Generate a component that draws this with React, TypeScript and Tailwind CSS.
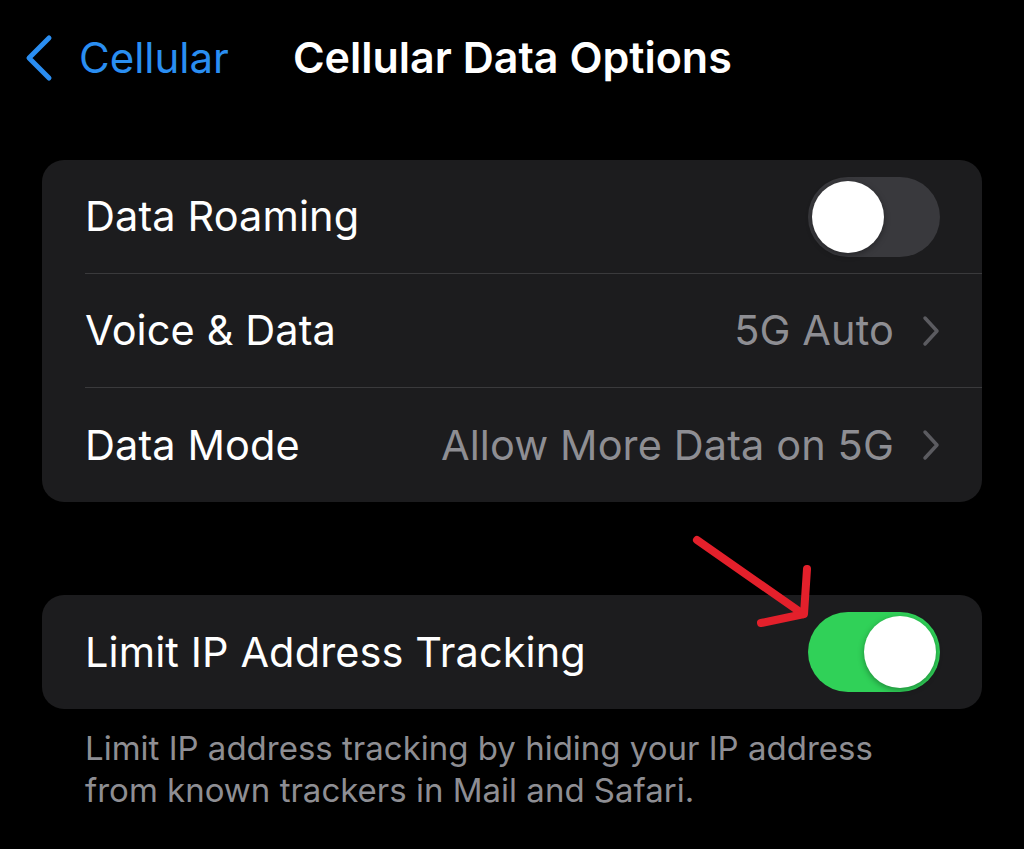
import { ReactNode } from "react";

const Toggle = ({ on }: { on: boolean }) => (
  <div
    className={`flex h-[80px] w-[132px] shrink-0 items-center rounded-full px-[4px] ${
      on ? "justify-end bg-[#30d158]" : "justify-start bg-[#39393d]"
    }`}
  >
    <div className="h-[72px] w-[72px] rounded-full bg-white shadow-[0_2px_6px_rgba(0,0,0,0.35)]" />
  </div>
);

const Chevron = () => (
  <svg width="18" height="32" viewBox="0 0 18 32" className="ml-[28px] shrink-0">
    <path d="M3 3 L15 16 L3 29" fill="none" stroke="#5b5b60" strokeWidth="3.5" strokeLinecap="round" strokeLinejoin="round" />
  </svg>
);

const Row = ({ label, right, last }: { label: string; right: ReactNode; last?: boolean }) => (
  <div className="pl-[43px]">
    <div
      className={`flex h-[114px] items-center justify-between pr-[42px] ${
        last ? "" : "border-b border-[#3a3a3c]"
      }`}
    >
      <span className="text-[41.5px] tracking-[0.1px] text-white">{label}</span>
      {right}
    </div>
  </div>
);

const Value = ({ text }: { text: string }) => (
  <div className="flex items-center">
    <span className="text-[41.5px] tracking-[0.1px] text-[#8e8e93]">{text}</span>
    <Chevron />
  </div>
);

export default function App() {
  return (
    <div
      className="relative h-[849px] w-[1024px] overflow-hidden bg-black"
      style={{ fontFamily: "Inter, 'Noto Sans', sans-serif" }}
    >
      {/* nav bar */}
      <div className="flex h-[115px] items-center pl-[24px]">
        <svg width="30" height="48" viewBox="0 0 30 48" className="shrink-0">
          <path d="M25 4 L5 24 L25 44" fill="none" stroke="#2a8ef2" strokeWidth="5" strokeLinecap="round" strokeLinejoin="round" />
        </svg>
        <span className="ml-[25px] text-[42px] text-[#2a8ef2]">Cellular</span>
        <span className="ml-[64px] text-[43px] font-semibold text-white">Cellular Data Options</span>
      </div>

      <div className="px-[42px] pt-[45px]">
        <div className="overflow-hidden rounded-[22px] bg-[#1c1c1e]">
          <Row label="Data Roaming" right={<Toggle on={false} />} />
          <Row label="Voice & Data" right={<Value text="5G Auto" />} />
          <Row label="Data Mode" right={<Value text="Allow More Data on 5G" />} last />
        </div>

        <div className="mt-[93px] overflow-hidden rounded-[22px] bg-[#1c1c1e]">
          <Row label="Limit IP Address Tracking" right={<Toggle on />} last />
        </div>

        <p className="mt-[18px] pl-[43px] pr-[40px] text-[33px] leading-[42px] text-[#8e8e93]">
          Limit IP address tracking by hiding your IP address from known trackers in Mail and Safari.
        </p>
      </div>

      {/* red annotation arrow */}
      <svg className="absolute left-0 top-0" width="1024" height="849" viewBox="0 0 1024 849">
        <g fill="none" stroke="#e3202b" strokeWidth="8" strokeLinecap="round" strokeLinejoin="round">
          <path d="M697 540 L803 614" />
          <path d="M807 569 L804 614 L761 623" />
        </g>
      </svg>
    </div>
  );
}
